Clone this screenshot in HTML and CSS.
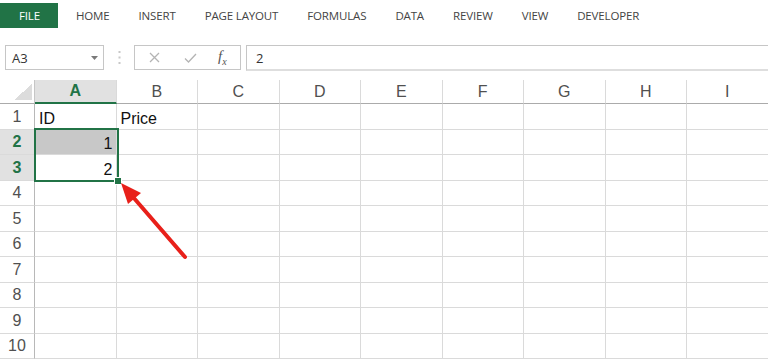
FILE: index.html
```html
<!DOCTYPE html>
<html>
<head>
<meta charset="utf-8">
<link rel="stylesheet" href="styles.css">
</head>
<body>
<div class="ribbon">
  <div class="file-tab">FILE</div>
  <div class="tabs">
    <span>HOME</span><span>INSERT</span><span>PAGE LAYOUT</span><span>FORMULAS</span><span>DATA</span><span>REVIEW</span><span>VIEW</span><span>DEVELOPER</span>
  </div>
</div>
<div class="fbar">
  <div class="namebox"><span>A3</span><svg class="caret" width="7" height="4" viewBox="0 0 7 4"><path d="M0 0H7L3.5 4Z" fill="#7a7a7a"/></svg></div>
  <div class="grip"><svg width="3" height="13" viewBox="0 0 3 13"><rect x="0.5" y="0" width="2" height="2" fill="#c8c8c8"/><rect x="0.5" y="5.5" width="2" height="2" fill="#c8c8c8"/><rect x="0.5" y="11" width="2" height="2" fill="#c8c8c8"/></svg></div>
  <div class="btns">
    <svg width="11" height="11" viewBox="0 0 11 11"><path d="M1 1L10 10M10 1L1 10" stroke="#b4b4b4" stroke-width="1.3"/></svg>
    <svg width="13" height="10" viewBox="0 0 13 10"><path d="M1 5.5L4.5 9L12 1" stroke="#b4b4b4" stroke-width="1.3" fill="none"/></svg>
    <span class="fx">f<sub>x</sub></span>
  </div>
  <div class="finput">2</div>
</div>
<div class="sheet">
  <div class="grid">
    <div class="corner"><div class="tri"></div></div>
    <div class="ch sel">A</div><div class="ch">B</div><div class="ch">C</div><div class="ch">D</div><div class="ch">E</div><div class="ch">F</div><div class="ch">G</div><div class="ch">H</div><div class="ch">I</div>

    <div class="rh">1</div><div class="c">ID</div><div class="c">Price</div><div class="c"></div><div class="c"></div><div class="c"></div><div class="c"></div><div class="c"></div><div class="c"></div><div class="c"></div>
    <div class="rh sel">2</div><div class="c num shade">1</div><div class="c"></div><div class="c"></div><div class="c"></div><div class="c"></div><div class="c"></div><div class="c"></div><div class="c"></div><div class="c"></div>
    <div class="rh sel">3</div><div class="c num">2</div><div class="c"></div><div class="c"></div><div class="c"></div><div class="c"></div><div class="c"></div><div class="c"></div><div class="c"></div><div class="c"></div>
    <div class="rh">4</div><div class="c"></div><div class="c"></div><div class="c"></div><div class="c"></div><div class="c"></div><div class="c"></div><div class="c"></div><div class="c"></div><div class="c"></div>
    <div class="rh">5</div><div class="c"></div><div class="c"></div><div class="c"></div><div class="c"></div><div class="c"></div><div class="c"></div><div class="c"></div><div class="c"></div><div class="c"></div>
    <div class="rh">6</div><div class="c"></div><div class="c"></div><div class="c"></div><div class="c"></div><div class="c"></div><div class="c"></div><div class="c"></div><div class="c"></div><div class="c"></div>
    <div class="rh">7</div><div class="c"></div><div class="c"></div><div class="c"></div><div class="c"></div><div class="c"></div><div class="c"></div><div class="c"></div><div class="c"></div><div class="c"></div>
    <div class="rh">8</div><div class="c"></div><div class="c"></div><div class="c"></div><div class="c"></div><div class="c"></div><div class="c"></div><div class="c"></div><div class="c"></div><div class="c"></div>
    <div class="rh">9</div><div class="c"></div><div class="c"></div><div class="c"></div><div class="c"></div><div class="c"></div><div class="c"></div><div class="c"></div><div class="c"></div><div class="c"></div>
    <div class="rh">10</div><div class="c"></div><div class="c"></div><div class="c"></div><div class="c"></div><div class="c"></div><div class="c"></div><div class="c"></div><div class="c"></div><div class="c"></div>
  </div>
  <div class="selection"><div class="handle"></div></div>
</div>
<svg class="arrow" width="768" height="362" viewBox="0 0 768 362">
  <line x1="185" y1="257" x2="133" y2="197" stroke="#e8201a" stroke-width="4" stroke-linecap="round"/>
  <polygon points="121,183 141,193 128,204" fill="#e8201a"/>
</svg>
</body>
</html>
```
FILE: styles.css
```css
html, body {
  margin: 0;
  padding: 0;
  background: #fff;
  width: 768px;
  height: 362px;
  overflow: hidden;
  position: relative;
}

.ribbon {
  display: flex;
  align-items: center;
  height: 28px;
  padding-top: 3px;
  box-sizing: border-box;
  font-family: "Open Sans", "Liberation Sans", sans-serif;
  font-size: 11.5px;
  letter-spacing: -0.15px;
  color: #444;
}
.file-tab {
  background: #217346;
  color: #fff;
  height: 25px;
  line-height: 25px;
  padding: 0 18px 0 19px;
}
.tabs {
  display: flex;
  gap: 29px;
  margin-left: 18px;
}

.fbar {
  display: flex;
  margin-top: 17px;
  height: 25px;
  padding-left: 5px;
  font-family: "Open Sans", "Liberation Sans", sans-serif;
  font-size: 13px;
  color: #333;
}
.namebox {
  width: 99px;
  box-sizing: border-box;
  border: 1px solid #c6c6c6;
  display: flex;
  align-items: center;
  justify-content: space-between;
  padding: 0 5px 0 6px;
}
.grip {
  width: 30px;
  display: flex;
  align-items: center;
  justify-content: center;
}
.btns {
  width: 107px;
  box-sizing: border-box;
  border: 1px solid #c6c6c6;
  display: flex;
  align-items: center;
  padding-left: 14px;
}
.btns svg:first-child { margin-right: 24px; }
.btns svg:nth-child(2) { margin-right: 21px; }
.fx {
  font-family: "Liberation Serif", serif;
  font-style: italic;
  font-size: 15px;
  color: #555;
}
.fx sub { font-size: 10px; }
.finput {
  flex: 1;
  margin-left: 5px;
  margin-right: -2px;
  border: 1px solid #c6c6c6;
  border-bottom: 2px solid #dedede;
  height: 26px;
  box-sizing: border-box;
  display: flex;
  align-items: center;
  padding-left: 9px;
}

.sheet {
  position: relative;
  margin-top: 10px;
}
.grid {
  display: grid;
  grid-template-columns: 35px repeat(9, 81.5px);
  grid-template-rows: 24px repeat(10, 25.5px);
  font-family: "Liberation Sans", Arial, sans-serif;
  font-size: 16px;
}
.grid > div {
  box-sizing: border-box;
  border-right: 1px solid #dadada;
  border-bottom: 1px solid #dadada;
}
.corner {
  display: flex;
  align-items: flex-end;
  justify-content: flex-end;
  padding: 0 2px 3px 0;
  border-bottom: 1px solid #ababab !important;
  border-right: 1px solid #c6c6c6 !important;
}
.tri {
  width: 18px;
  height: 16px;
  background: linear-gradient(to bottom right, transparent 50%, #dcdcdc 50%);
}
.ch {
  display: flex;
  align-items: center;
  justify-content: center;
  color: #505050;
  border-bottom: 1px solid #ababab !important;
}
.ch.sel {
  background: #e1e1e1;
  color: #217346;
  font-weight: bold;
  border-bottom: 2px solid #217346 !important;
}
.rh {
  display: flex;
  align-items: center;
  justify-content: center;
  color: #505050;
  border-right: 1px solid #b8b8b8 !important;
  padding-top: 1px;
}
.rh.sel {
  background: #e1e1e1;
  color: #217346;
  font-weight: bold;
}
.c {
  display: flex;
  align-items: flex-end;
  padding: 0 3px 1px 4px;
  line-height: 18px;
  color: #111;
}
.c.num { justify-content: flex-end; }
.c.shade { background: #c8c8c8; }

.selection {
  position: absolute;
  left: 34px;
  top: 48px;
  width: 85px;
  height: 54px;
  box-sizing: border-box;
  border: 2px solid #217346;
}
.handle {
  position: absolute;
  right: -5px;
  bottom: -5px;
  width: 6px;
  height: 6px;
  background: #217346;
  border: 1px solid #fff;
}

.arrow {
  position: absolute;
  left: 0;
  top: 0;
  pointer-events: none;
}
```
